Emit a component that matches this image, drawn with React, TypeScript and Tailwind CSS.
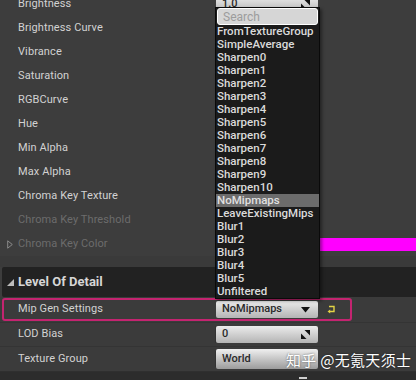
import React from 'react';

const rows = [
  { label: 'Brightness', kind: 'num', value: '1.0' },
  { label: 'Brightness Curve' },
  { label: 'Vibrance' },
  { label: 'Saturation' },
  { label: 'RGBCurve' },
  { label: 'Hue' },
  { label: 'Min Alpha' },
  { label: 'Max Alpha' },
  { label: 'Chroma Key Texture' },
  { label: 'Chroma Key Threshold', disabled: true },
  { label: 'Chroma Key Color', disabled: true, kind: 'color', expand: true },
];

const options = [
  'FromTextureGroup',
  'SimpleAverage',
  'Sharpen0',
  'Sharpen1',
  'Sharpen2',
  'Sharpen3',
  'Sharpen4',
  'Sharpen5',
  'Sharpen6',
  'Sharpen7',
  'Sharpen8',
  'Sharpen9',
  'Sharpen10',
  'NoMipmaps',
  'LeaveExistingMips',
  'Blur1',
  'Blur2',
  'Blur3',
  'Blur4',
  'Blur5',
  'Unfiltered',
];

function SpinIcon() {
  return (
    <svg width="9" height="9" viewBox="0 0 9 9" className="shrink-0">
      <polygon points="9,0 9,5.5 3.5,0" fill="#111" />
      <polygon points="0,9 0,3.5 5.5,9" fill="#111" />
    </svg>
  );
}

function ResetIcon() {
  return (
    <svg width="9" height="9" viewBox="0 0 9 9">
      <path d="M2 1.5 H7 V6.5 H3" fill="none" stroke="#e2d345" strokeWidth="1.4" />
      <polygon points="0.5,6.5 3.2,4.4 3.2,8.6" fill="#e2d345" />
    </svg>
  );
}

function ValueBox({ text, right }: { text: string; right: React.ReactNode }) {
  return (
    <div className="flex h-[17px] w-[102px] items-center justify-between rounded-[2px] bg-gradient-to-b from-[#ececec] to-[#b4b4b4] pl-[6px] pr-[8px] text-[11px] font-medium text-[#2a2a2a]">
      <span>{text}</span>
      {right}
    </div>
  );
}

export default function App() {
  return (
    <div
      className="relative h-[380px] w-[416px] overflow-hidden bg-[#3d3d3d]"
      style={{ fontFamily: 'Roboto, "Liberation Sans", sans-serif' }}
    >
      <div className="mt-[-8px] flex flex-col">
        {rows.map((r) => (
          <div key={r.label} className="flex h-[24px] items-center">
            <div className="flex w-[216px] items-center">
              <div className="flex w-[18px] justify-center pl-[2px]">
                {r.expand && (
                  <svg width="6" height="9" viewBox="0 0 6 9">
                    <polygon points="0.7,0.8 5.3,4.5 0.7,8.2" fill="none" stroke="#8a8a8a" strokeWidth="1" />
                  </svg>
                )}
              </div>
              <span className={`text-[11px] tracking-[0.1px] ${r.disabled ? 'text-[#6c6c6c]' : 'text-[#d2d2d2]'}`}>{r.label}</span>
            </div>
            <div className="flex flex-1 items-center">
              {r.kind === 'num' && <ValueBox text={r.value ?? ''} right={<SpinIcon />} />}
              {r.kind === 'color' && <div className="h-[13px] flex-1 bg-[#ff00ff]" />}
            </div>
          </div>
        ))}

        <div className="h-[11px] bg-[#3a3a3a]" />

        <div className="ml-[2px] flex h-[30px] items-center gap-[4px] rounded-l-[2px] bg-[#222222] pl-[5px]">
          <svg width="7" height="7" viewBox="0 0 7 7">
            <polygon points="7,0 7,7 0,7" fill="#bdbdbd" />
          </svg>
          <span className="text-[13px] font-bold text-[#d6d6d6]">Level Of Detail</span>
        </div>

        <div className="flex flex-col bg-[#3b3b3b]">
          <div className="flex h-[26px] items-center border-b border-[#343434] px-[2px]">
            <div className="flex h-[23px] w-[350px] items-center rounded-[3px] border-2 border-[#c42470]">
              <span className="w-[212px] pl-[14px] text-[11px] tracking-[0.1px] text-[#d2d2d2]">Mip Gen Settings</span>
              <ValueBox
                text="NoMipmaps"
                right={
                  <svg width="9" height="6" viewBox="0 0 9 6">
                    <polygon points="0,0 9,0 4.5,5.5" fill="#111" />
                  </svg>
                }
              />
              <div className="ml-[9px] flex">
                <ResetIcon />
              </div>
            </div>
          </div>
          <div className="flex h-[24px] items-center border-b border-[#343434]">
            <span className="w-[216px] border-r border-[#333] pl-[18px] text-[11px] tracking-[0.1px] text-[#d2d2d2]">LOD Bias</span>
            <ValueBox text="0" right={<SpinIcon />} />
          </div>
          <div className="flex h-[25px] items-center border-b border-[#2f2f2f]">
            <span className="w-[216px] border-r border-[#333] pl-[18px] text-[11px] tracking-[0.1px] text-[#d2d2d2]">Texture Group</span>
            <div className="flex h-[20px] w-[102px] items-center rounded-[2px] bg-gradient-to-b from-[#f0f0f0] to-[#9c9c9c] pl-[6px] text-[11px] font-medium text-[#2a2a2a]">
              World
            </div>
          </div>
          <div className="flex h-[10px] justify-center bg-[#2c2c2c] pl-[190px]">
            <div className="mt-[5px] h-[2px] w-[8px] bg-[#cfcfcf]" />
          </div>
        </div>
      </div>

      <div className="absolute left-[215px] top-[7px] w-[105px] border border-[#0a0a0a] bg-[#1b1b1b] shadow-[2px_2px_3px_rgba(0,0,0,0.4)]">
        <div className="mx-[1px] flex h-[17px] items-center rounded-[3px] border border-white bg-[#d6d6d6] pl-[5px] text-[12px] text-[#9c9c9c]">
          Search
        </div>
        <div className="flex flex-col">
          {options.map((o) => (
            <div
              key={o}
              className={`flex h-[13px] items-center pl-[1px] text-[11.5px] font-medium leading-none ${
                o === 'NoMipmaps' ? 'bg-[#6c6c6c] text-[#e0e0e0]' : 'text-[#dadada]'
              }`}
            >
              {o}
            </div>
          ))}
        </div>
      </div>

      <div
        className="absolute left-[286px] top-[349px] text-[15px] tracking-[0.3px] text-white [text-shadow:0_0_2px_rgba(0,0,0,0.6)]"
        style={{ fontFamily: '"Noto Sans CJK SC", sans-serif' }}
      >
        知乎 @无氪天须士
      </div>
    </div>
  );
}
